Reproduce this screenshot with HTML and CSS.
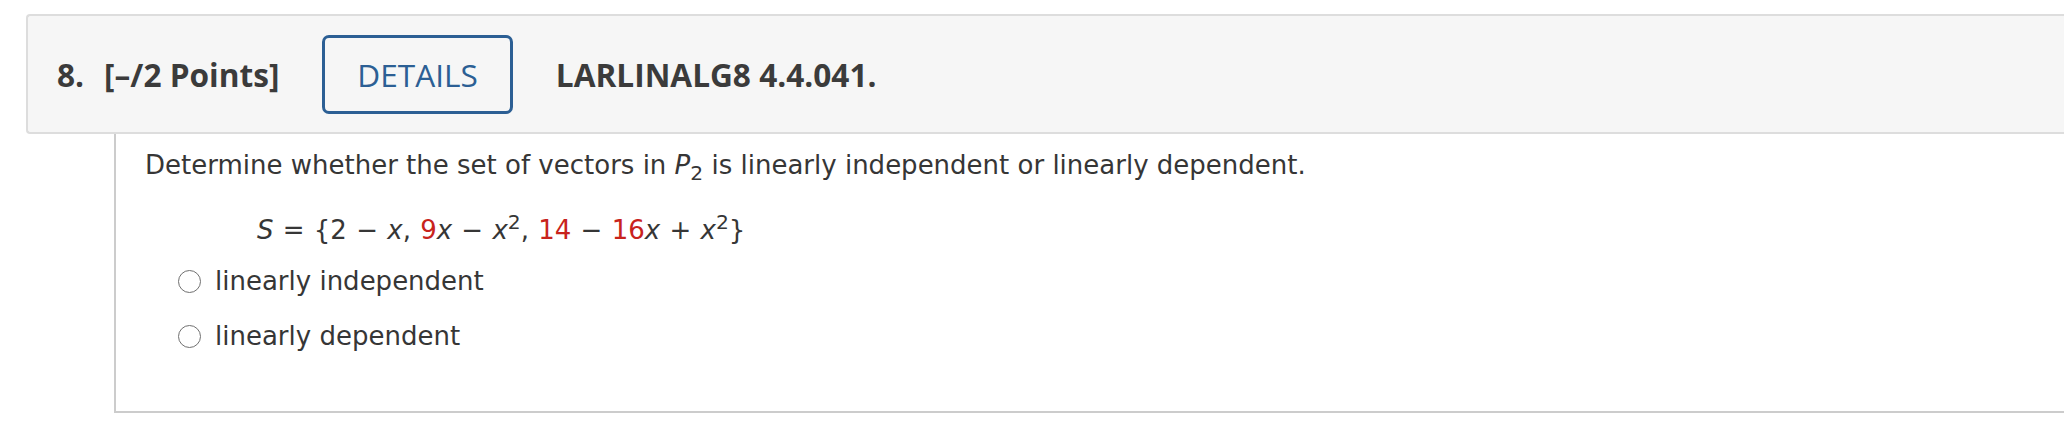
FILE: index.html
```html
<!DOCTYPE html>
<html lang="en">
<head>
<meta charset="utf-8">
<title>Question 8</title>
<link rel="stylesheet" href="styles.css">
</head>
<body>
<div class="page">
  <div class="q-header">
    <span class="q-num">8.</span>
    <span class="q-points">[&ndash;/2 Points]</span>
    <button class="details-btn" type="button">DETAILS</button>
    <span class="q-ref">LARLINALG8 4.4.041.</span>
  </div>
  <div class="q-body">
    <p class="prompt">Determine whether the set of vectors in <i>P</i><sub>2</sub> is linearly independent or linearly dependent.</p>
    <p class="math"><i>S</i> = {2 &minus; <i>x</i>, <span class="red">9</span><i>x</i> &minus; <i>x</i><sup>2</sup>, <span class="red">14</span> &minus; <span class="red">16</span><i>x</i> + <i>x</i><sup>2</sup>}</p>
    <label class="opt"><span class="radio"></span><span>linearly independent</span></label>
    <label class="opt"><span class="radio"></span><span>linearly dependent</span></label>
  </div>
</div>
</body>
</html>
```

FILE: styles.css
```css
html, body {
  margin: 0;
  padding: 0;
  background: #ffffff;
  overflow: hidden;
}

.page {
  padding: 14px 0 0 26px;
}

.q-header {
  display: flex;
  align-items: center;
  height: 116px;
  background: #f6f6f6;
  border: 2px solid #dddddd;
  border-right: none;
  border-radius: 4px 0 0 4px;
  padding-left: 29px;
  font-family: "Open Sans", sans-serif;
  font-weight: 700;
  font-size: 31.6px;
  color: #3b3b3b;
}

.q-num {
  margin-right: 20px;
}

.details-btn {
  margin-left: 43px;
  margin-right: 43px;
  height: 79px;
  padding: 0 32px;
  background: transparent;
  border: 3.5px solid #2c5f94;
  border-radius: 7px;
  font-family: "Open Sans", sans-serif;
  font-weight: 500;
  font-size: 31.6px;
  color: #2c5f94;
  cursor: pointer;
}

.q-body {
  margin-left: 88px;
  border-left: 2px solid #cccccc;
  border-bottom: 2px solid #cccccc;
  height: 279px;
  box-sizing: border-box;
  padding: 12px 0 0 29px;
  font-family: "DejaVu Sans", Verdana, sans-serif;
  font-size: 26px;
  line-height: 38px;
  color: #363636;
}

.prompt {
  margin: 0;
}

.math {
  margin: 27px 0 5px 112px;
  word-spacing: 1px;
}

sub, sup {
  font-size: 0.78em;
  line-height: 0;
}

.red {
  color: #c8231c;
}

.opt {
  display: flex;
  align-items: center;
  margin-left: 33px;
  line-height: 55px;
}

.radio {
  width: 21px;
  height: 21px;
  border: 1.8px solid #707070;
  border-radius: 50%;
  background: #ffffff;
  margin-right: 14px;
  flex: none;
}
```
